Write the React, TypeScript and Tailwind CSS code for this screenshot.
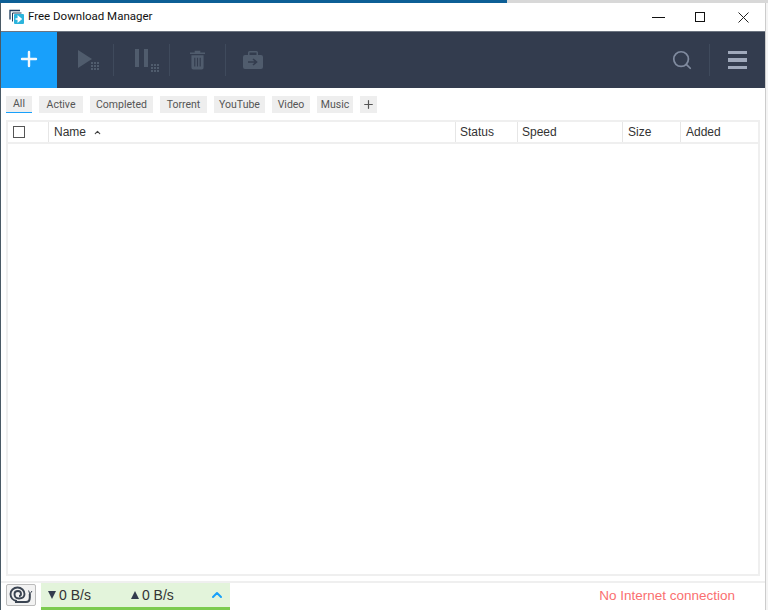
import { ChevronUp, Plus, Search } from 'lucide-react';

const filters = [
  { label: 'Active', width: 'w-[44px]' },
  { label: 'Completed', width: 'w-[63px]' },
  { label: 'Torrent', width: 'w-[47px]' },
  { label: 'YouTube', width: 'w-[51px]' },
  { label: 'Video', width: 'w-[38px]' },
  { label: 'Music', width: 'w-[36px]' },
];

// the little dot grid next to play / pause
function DotGrid() {
  return (
    <div className="grid grid-cols-3 gap-px w-[8px] h-[8px]">
      {Array.from({ length: 9 }).map((_, i) => (
        <span key={i} className="w-[2px] h-[2px] bg-[#505c6d]" />
      ))}
    </div>
  );
}

function AppLogo() {
  return (
    <svg width="16" height="16" viewBox="0 0 16 16">
      <path d="M1 10.500V1.500h10" fill="none" stroke="#1d3c5c" strokeWidth="1.300" />
      <path d="M3.500 12.500V4h9" fill="none" stroke="#1d3c5c" strokeWidth="1" />
      <rect x="5" y="5" width="10" height="10" rx="1" fill="#2bb4dc" />
      <path d="M6.500 10h4M9.200 7.500l3 2.500-3 2.500z" stroke="#fff" strokeWidth="1.300" fill="#fff" />
    </svg>
  );
}

function SnailIcon() {
  return (
    <svg width="24" height="18" viewBox="0 0 24 18" fill="none" stroke="#3a4452">
      <path d="M8 15C4 14.500 1.500 11.500 1.500 8S4.500 1.500 8.500 1.500 15.500 4.500 15.500 8 13 12.500 10 12.500 5.500 10.500 5.500 8 7 5 9 5s3 1.500 3 3-1 2-2 2" strokeWidth="1.900" />
      <path d="M6 16h11c2.500 0 3.800-1.500 3.800-4.500V8" strokeWidth="2" />
      <path d="M20.800 8l-1.200-3.500M20.800 8l2.200-3" strokeWidth="1" />
    </svg>
  );
}

function ToolbarDivider() {
  return <div className="w-px h-[32px] bg-[#3f4a5c]" />;
}

export default function App() {
  return (
    <div className="h-[610px] w-[768px] flex flex-col overflow-hidden bg-[#f4f4f4] font-['Liberation_Sans',sans-serif]">
      <div className="h-[3px] shrink-0 flex">
        <div className="w-[507px] bg-[#0d5f96]" />
        <div className="flex-1 bg-[#d8d8d8]" />
      </div>
      <div className="flex-1 flex min-h-0">
        <div className="w-px bg-[#4a5a66]" />
        <div className="w-[764px] flex flex-col bg-white">
          {/* title bar */}
          <div className="h-[28px] shrink-0 flex items-center">
            <div className="ml-[8px] w-[16px] flex"><AppLogo /></div>
            <span className="ml-[3px] text-[11.500px] text-[#111] font-['Roboto',sans-serif]">Free Download Manager</span>
            <div className="ml-auto flex items-center">
              <span className="w-[13px] h-px bg-[#111] mr-[30px]" />
              <span className="w-[10px] h-[10px] border border-[#111] mr-[33px]" />
              <svg width="11" height="11" viewBox="0 0 11 11" className="mr-[16px]">
                <path d="M0.500 0.500l10 10M10.500 0.500l-10 10" stroke="#222" strokeWidth="1" />
              </svg>
            </div>
          </div>

          {/* toolbar */}
          <div className="h-[57px] shrink-0 flex items-center bg-[#333c4e] border-t border-[#6c7480]">
            <div className="w-[56px] h-full flex items-center justify-center pr-[1px] pb-[2px] bg-[#18a0fb]">
              <Plus size={24} strokeWidth={2.400} className="text-[#f2f8fc]" />
            </div>
            <div className="w-[56px] flex pl-[21px]">
              <div className="w-0 h-0 border-y-[9px] border-y-transparent border-l-[14px] border-l-[#505c6d]" />
              <div className="mt-[12px] -ml-[1px]"><DotGrid /></div>
            </div>
            <ToolbarDivider />
            <div className="w-[55px] flex pl-[21px]">
              <div className="flex gap-[5px]">
                <span className="w-[4px] h-[18px] bg-[#505c6d]" />
                <span className="w-[4px] h-[18px] bg-[#505c6d]" />
              </div>
              <div className="mt-[15px] ml-[3px]"><DotGrid /></div>
            </div>
            <ToolbarDivider />
            <div className="w-[55px] flex pl-[20px]">
              <svg width="15" height="20" viewBox="0 0 16 20" fill="#505c6d">
                <path d="M5 0h6v2h5v1.600H0V2h5zM1.500 5h13v13a2 2 0 0 1-2 2h-9a2 2 0 0 1-2-2zM4.500 7.500v9.500h1.200V7.500zM7.400 7.500v9.500h1.200V7.500zM10.300 7.500v9.500h1.200V7.500z" fillRule="evenodd" />
              </svg>
            </div>
            <ToolbarDivider />
            <div className="w-[55px] flex pl-[17px]">
              <svg width="20" height="18" viewBox="0 0 20 18">
                <path d="M5 4V1.500A1.500 1.500 0 0 1 6.500 0h7A1.500 1.500 0 0 1 15 1.500V4h3a2 2 0 0 1 2 2v10a2 2 0 0 1-2 2H2a2 2 0 0 1-2-2V6a2 2 0 0 1 2-2zM6.500 1.500V4h7V1.500z" fill="#505c6d" fillRule="evenodd" />
                <path d="M5 11h8M10 8l3.500 3-3.500 3" fill="none" stroke="#333c4e" strokeWidth="1.600" />
              </svg>
            </div>
            <div className="ml-auto flex items-center">
              <Search size={22} strokeWidth={1.900} className="text-[#808b9f] mr-[16px]" />
              <ToolbarDivider />
              <div className="w-[19px] ml-[18px] mr-[18px] flex flex-col gap-[4px]">
                <span className="h-[3px] bg-[#a0a9bb]" />
                <span className="h-[4px] bg-[#a0a9bb]" />
                <span className="h-[3px] bg-[#a0a9bb]" />
              </div>
            </div>
          </div>

          {/* filter tabs */}
          <div className="h-[32px] shrink-0 flex items-center pt-[1px] pl-[5px] gap-[7px] text-[10.500px] text-[#555] font-['Roboto',sans-serif]">
            <span className="h-[17px] w-[26px] flex items-center justify-center bg-[#eeeeee] border-b border-[#18a0fb]">All</span>
            {filters.map((f) => (
              <span key={f.label} className={`h-[17px] ${f.width} flex items-center justify-center bg-[#eeeeee]`}>{f.label}</span>
            ))}
            <span className="h-[17px] w-[17px] flex items-center justify-center bg-[#eeeeee]">
              <Plus size={13} strokeWidth={2.200} className="text-[#555]" />
            </span>
          </div>

          {/* table */}
          <div className="flex-1 mx-[5px] flex flex-col border-2 border-[#efefef] min-h-0">
            <div className="h-[20px] shrink-0 flex border-b-2 border-[#efefef] text-[12px] text-[#333] box-content">
              <div className="w-[41px] flex items-center border-r border-[#e6e6e6] pl-[5px]">
                <span className="w-[12px] h-[12px] border border-[#555] bg-white" />
              </div>
              <div className="w-[407px] flex items-center pl-[5px] border-r border-[#e6e6e6]">
                Name
                <ChevronUp size={9} strokeWidth={3} className="ml-[7px] text-[#444]" />
              </div>
              <div className="w-[62px] flex items-center pl-[4px] border-r border-[#e6e6e6]">Status</div>
              <div className="w-[105px] flex items-center pl-[4px] border-r border-[#e6e6e6]">Speed</div>
              <div className="w-[58px] flex items-center pl-[5px] border-r border-[#e6e6e6]">Size</div>
              <div className="flex-1 flex items-center pl-[5px]">Added</div>
            </div>
          </div>

          {/* status bar */}
          <div className="h-[29px] shrink-0 mt-[5px] flex bg-white border-t-2 border-[#efefef]">
            <div className="w-[40px] flex items-start pt-[1px] pl-[5px]">
              <div className="w-[30px] h-[22px] flex items-center justify-center rounded-[2px] bg-[#f2f2f2] border border-[#bbbbbb]">
                <SnailIcon />
              </div>
            </div>
            <div className="w-[189px] flex items-center pl-[7px] bg-[#e3f4db] border-b-[3px] border-[#7ccb4f] text-[14px] text-[#333]">
              <span className="w-0 h-0 border-x-[4px] border-x-transparent border-t-[8px] border-t-[#333c4e]" />
              <span className="ml-[3px]">0 B/s</span>
              <span className="ml-[40px] w-0 h-0 border-x-[4px] border-x-transparent border-b-[8px] border-b-[#333c4e]" />
              <span className="ml-[3px]">0 B/s</span>
              <ChevronUp size={16} strokeWidth={3} className="ml-auto mr-[5px] text-[#18a0fb]" />
            </div>
            <div className="flex-1 flex items-center justify-end pr-[30px] text-[13.500px] text-[#fa6f6f]">
              No Internet connection
            </div>
          </div>
        </div>
        <div className="w-px bg-[#cccccc]" />
        <div className="flex-1 bg-[#f4f4f4]" />
      </div>
    </div>
  );
}
